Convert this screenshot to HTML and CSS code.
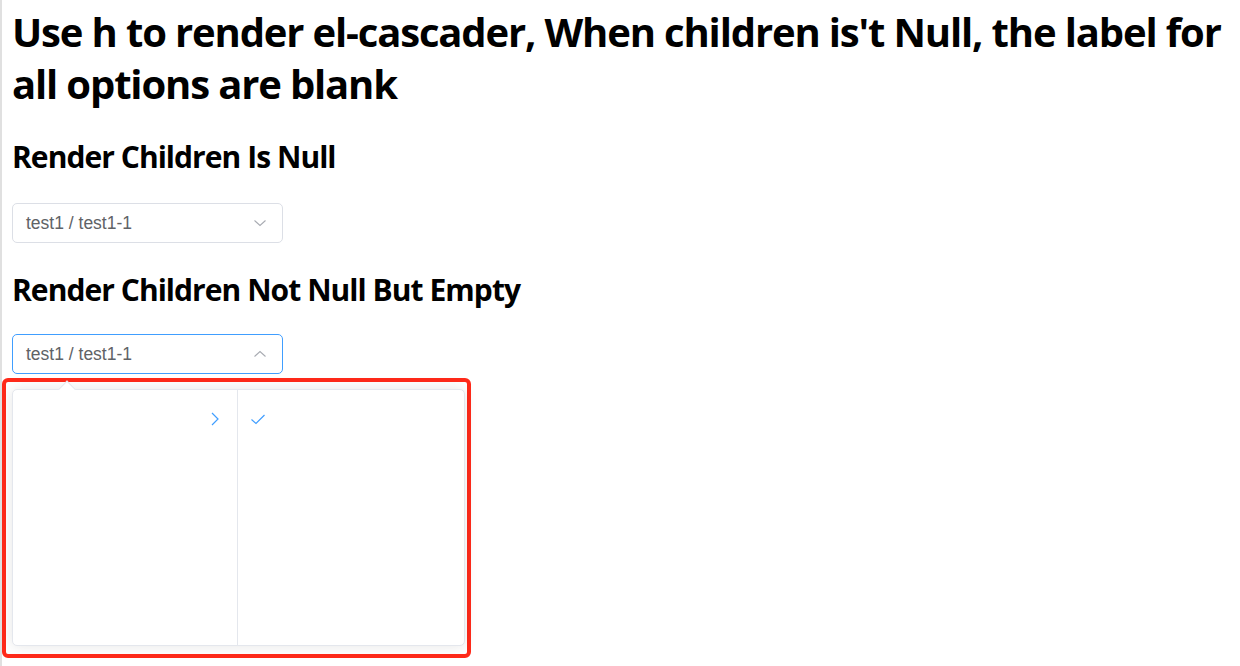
FILE: index.html
```html
<!DOCTYPE html>
<html lang="en">
<head>
<meta charset="utf-8">
<title>el-cascader render demo</title>
<link rel="stylesheet" href="styles.css">
</head>
<body>
<div class="app">
  <h1 class="title">Use h to render el-cascader, When children is't Null, the label for all options are blank</h1>

  <h2 class="section-title">Render Children Is Null</h2>
  <div class="cascader">
    <span class="cascader-value">test1 / test1-1</span>
    <svg class="cascader-arrow" viewBox="0 0 16 16" width="16" height="16"><path d="M2.5 5.5 L8 10.5 L13.5 5.5" fill="none" stroke="#a8abb2" stroke-width="1.1"/></svg>
  </div>

  <h2 class="section-title">Render Children Not Null But Empty</h2>
  <div class="cascader is-focus">
    <span class="cascader-value">test1 / test1-1</span>
    <svg class="cascader-arrow" viewBox="0 0 16 16" width="16" height="16"><path d="M2.5 10.5 L8 5.5 L13.5 10.5" fill="none" stroke="#a8abb2" stroke-width="1.1"/></svg>
  </div>

  <div class="highlight">
    <div class="dropdown">
      <span class="dropdown-arrow"></span>
      <div class="menu">
        <div class="menu-item">
          <span class="menu-label"></span>
          <svg class="item-icon" viewBox="0 0 10 16" width="10" height="16"><path d="M2 2 L8 8 L2 14" fill="none" stroke="#409eff" stroke-width="1.2"/></svg>
        </div>
      </div>
      <div class="menu">
        <div class="menu-item">
          <svg class="item-check" viewBox="0 0 16 16" width="16" height="16"><path d="M1.5 8.5 L6 12.5 L14.5 4" fill="none" stroke="#409eff" stroke-width="1.2"/></svg>
          <span class="menu-label"></span>
        </div>
      </div>
    </div>
  </div>
</div>
</body>
</html>
```

FILE: styles.css
```css
html, body {
  margin: 0;
  padding: 0;
  background: #fff;
}

body {
  border-left: 2px solid #e0e0e0;
  min-height: 666px;
  box-sizing: border-box;
}

.app {
  padding: 0 10px;
  font-family: "Open Sans", "Noto Sans", sans-serif;
  color: #000;
}

.title {
  font-size: 40px;
  line-height: 52px;
  font-weight: 700;
  letter-spacing: -1.15px;
  margin: 6px 0 0;
}

.section-title {
  font-size: 30px;
  line-height: 40px;
  font-weight: 700;
  letter-spacing: -0.95px;
  margin: 27px 0 0;
}

.cascader {
  margin-top: 26px;
  height: 38px;
  border: 1px solid #dcdfe6;
  border-radius: 5px;
  display: flex;
  align-items: center;
  padding: 0 14px 0 13px;
  box-sizing: content-box;
  width: 242px;
  font-family: "Liberation Sans", Arial, sans-serif;
  font-size: 17.5px;
  color: #606266;
}

.cascader.is-focus {
  margin-top: 24px;
  border-color: #409eff;
}

.cascader-value {
  flex: 1;
}

.cascader-arrow {
  flex: none;
}

.highlight {
  margin: 4px 0 0 -10px;
  width: 453px;
  border: 4px solid #ff2a1a;
  border-radius: 6px;
  padding: 7px 2px 8px 6px;
  box-sizing: content-box;
}

.dropdown {
  position: relative;
  display: flex;
  width: 453px;
  height: 257px;
  box-sizing: border-box;
  border: 1px solid #e4e7ed;
  border-radius: 5px;
  background: #fff;
  box-shadow: 0 0 14px rgba(0, 0, 0, 0.1);
}

.dropdown-arrow {
  position: absolute;
  top: -7px;
  left: 48px;
  width: 11px;
  height: 11px;
  background: #fff;
  border-left: 1px solid #e4e7ed;
  border-top: 1px solid #e4e7ed;
  transform: rotate(45deg);
}

.menu {
  width: 224px;
  padding: 8px 0;
  box-sizing: border-box;
}

.menu + .menu {
  border-left: 1px solid #e4e7ed;
  flex: 1;
}

.menu-item {
  height: 42px;
  display: flex;
  align-items: center;
  padding: 0 17px 0 25px;
}

.menu-label {
  flex: 1;
}

.item-icon {
  flex: none;
}

.item-check {
  flex: none;
  margin-left: -13px;
}
```
